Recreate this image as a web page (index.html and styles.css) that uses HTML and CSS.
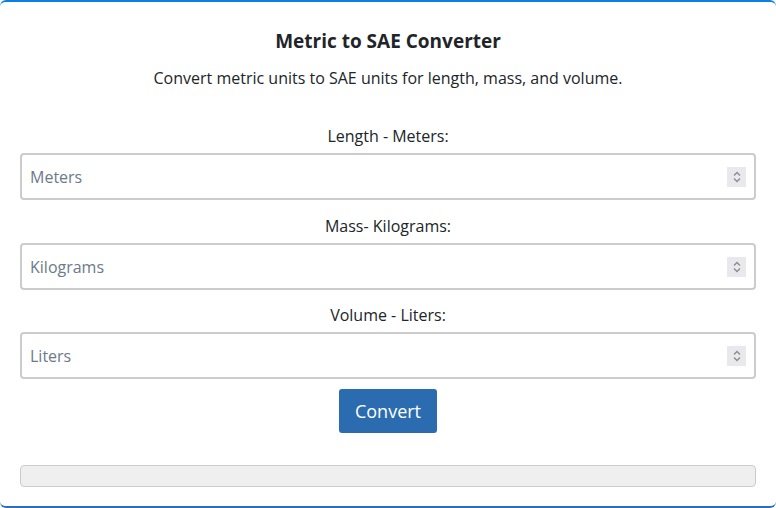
FILE: index.html
```html
<!DOCTYPE html>
<html lang="en">
<head>
    <meta charset="UTF-8">
    <meta name="viewport" content="width=device-width, initial-scale=1.0">
    <title>Metric to SAE Converter</title>
    <link rel="stylesheet" href="styles.css">
</head>
<body>
    <div class="container">
        <h1>Metric to SAE Converter</h1>
        <p class="intro">Convert metric units to SAE units for length, mass, and volume.</p>

        <label for="meters">Length - Meters:</label>
        <div class="field">
            <input type="number" id="meters" placeholder="Meters">
            <span class="spin">
                <svg width="10" height="14" viewBox="0 0 10 14"><path d="M2 5.5 L5 2.5 L8 5.5 M2 8.5 L5 11.5 L8 8.5" fill="none" stroke="#8a8a8a" stroke-width="1.3"/></svg>
            </span>
        </div>

        <label for="kilograms">Mass- Kilograms:</label>
        <div class="field">
            <input type="number" id="kilograms" placeholder="Kilograms">
            <span class="spin">
                <svg width="10" height="14" viewBox="0 0 10 14"><path d="M2 5.5 L5 2.5 L8 5.5 M2 8.5 L5 11.5 L8 8.5" fill="none" stroke="#8a8a8a" stroke-width="1.3"/></svg>
            </span>
        </div>

        <label for="liters" class="last">Volume - Liters:</label>
        <div class="field">
            <input type="number" id="liters" placeholder="Liters">
            <span class="spin">
                <svg width="10" height="14" viewBox="0 0 10 14"><path d="M2 5.5 L5 2.5 L8 5.5 M2 8.5 L5 11.5 L8 8.5" fill="none" stroke="#8a8a8a" stroke-width="1.3"/></svg>
            </span>
        </div>

        <button onclick="convert()">Convert</button>

        <div id="result"></div>
    </div>

    <script>
        function convert() {
            const m = parseFloat(document.getElementById('meters').value);
            const kg = parseFloat(document.getElementById('kilograms').value);
            const l = parseFloat(document.getElementById('liters').value);
            const out = [];

            // Only show the values that were entered
            if (!isNaN(m)) out.push(`${(m * 3.28084).toFixed(2)} ft`);
            if (!isNaN(kg)) out.push(`${(kg * 2.20462).toFixed(2)} lb`);
            if (!isNaN(l)) out.push(`${(l * 0.264172).toFixed(2)} gal`);

            document.getElementById('result').innerText = out.join(' | ');
        }
    </script>
</body>
</html>
```

FILE: styles.css
```css
body {
    font-family: "Open Sans", "Noto Sans", sans-serif;
    margin: 0;
    background-color: #fff;
    color: #212529;
}

.container {
    height: 504px;
    padding: 0 20px;
    border-top: 2px solid #0d7fe3;
    border-bottom: 2px solid #2a6fb8;
    border-radius: 6px;
    text-align: center;
}

h1 {
    font-size: 19px;
    font-weight: bold;
    margin: 27px 0 0;
    line-height: 24px;
}

.intro {
    font-size: 16px;
    margin: 13px 0 0;
    line-height: 24px;
}

label {
    display: block;
    font-size: 16px;
    line-height: 24px;
    margin: 14px 0 5px;
}

.intro + label {
    margin-top: 34px;
}

label.last {
    margin-top: 13px;
}

.field {
    position: relative;
}

input[type="number"] {
    display: block;
    box-sizing: border-box;
    width: 100%;
    height: 47px;
    padding: 0 8px;
    border: 2px solid #ccc;
    border-radius: 4px;
    font-family: inherit;
    font-size: 16px;
    color: #212529;
    -moz-appearance: textfield;
}

input[type="number"]::placeholder {
    color: #6c7a89;
}

input::-webkit-outer-spin-button,
input::-webkit-inner-spin-button {
    -webkit-appearance: none;
    margin: 0;
}

.spin {
    position: absolute;
    right: 10px;
    top: 14px;
    width: 19px;
    height: 20px;
    background-color: #e9e9ed;
    display: flex;
    align-items: center;
    justify-content: center;
}

button {
    display: block;
    margin: 10px auto 0;
    width: 98px;
    height: 44px;
    background-color: #2b6cb0;
    color: #fff;
    border: none;
    border-radius: 3px;
    font-family: inherit;
    font-size: 18px;
    cursor: pointer;
}

#result {
    margin-top: 32px;
    height: 20px;
    background-color: #efefef;
    border: 1px solid #ccc;
    border-radius: 4px;
    font-size: 14px;
    line-height: 20px;
}
```
